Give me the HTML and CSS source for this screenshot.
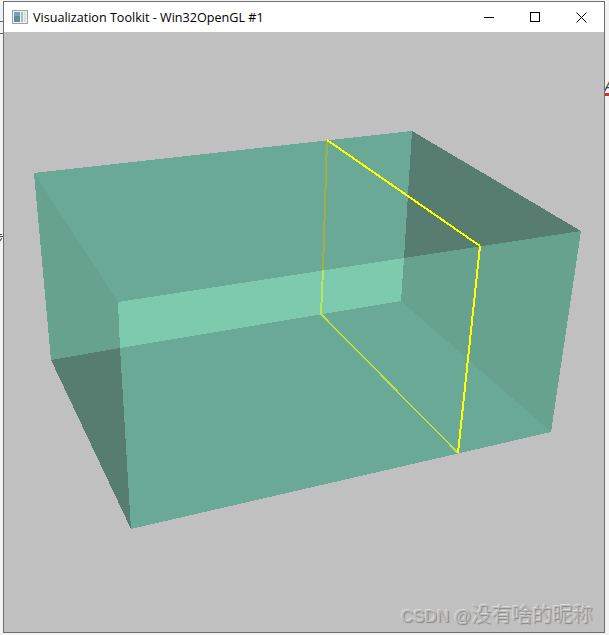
FILE: index.html
```html
<!DOCTYPE html>
<html lang="en">
<head>
<meta charset="utf-8">
<title>Visualization Toolkit - Win32OpenGL #1</title>
<link rel="stylesheet" href="styles.css">
</head>
<body>
<div class="desktop">
  <i class="bg-line bg-line-a"></i>
  <i class="bg-line bg-line-b"></i>
  <span class="bg-glyph bg-glyph-left">步</span>
  <span class="bg-glyph bg-glyph-right">A</span>
  <i class="bg-red"></i>
  <section class="window">
    <header class="titlebar">
      <svg class="app-icon" width="16" height="14" viewBox="0 0 16 14" aria-hidden="true">
        <rect x="0.5" y="0.5" width="15" height="13" fill="#eef2f4" stroke="#9aa3aa"/>
        <rect x="2" y="2" width="6" height="10" fill="#5f8f90"/>
        <rect x="2" y="2" width="6" height="4" fill="#7d9db8"/>
        <rect x="9" y="2" width="2" height="10" fill="#9fc4b4"/>
        <rect x="12" y="2" width="2" height="10" fill="#d5dfe4"/>
      </svg>
      <span class="title">Visualization Toolkit - Win32OpenGL #1</span>
      <div class="controls">
        <span class="ctl">
          <svg width="10" height="10" viewBox="0 0 10 10" aria-hidden="true"><path d="M0 5.5H10" stroke="#000" fill="none"/></svg>
        </span>
        <span class="ctl">
          <svg width="10" height="10" viewBox="0 0 10 10" aria-hidden="true"><rect x="0.5" y="0.5" width="9" height="9" stroke="#000" fill="none"/></svg>
        </span>
        <span class="ctl">
          <svg width="11" height="11" viewBox="0 0 11 11" aria-hidden="true"><path d="M0.5 0.5L10.5 10.5M10.5 0.5L0.5 10.5" stroke="#000" stroke-width="1" fill="none"/></svg>
        </span>
      </div>
    </header>
    <div class="viewport">
      <svg class="scene" width="600" height="600" viewBox="4 32 600 600" shape-rendering="crispEdges" aria-hidden="true">
        <polygon class="f-top" points="34,173 412,131 404,258 118,302"/>
        <polygon class="f-dark" points="412,131 581,231 404,258"/>
        <polygon class="f-side" points="404,258 581,231 551,432 401,301"/>
        <polygon class="f-band" points="118,302 404,258 401,301 120,348"/>
        <polygon class="f-side" points="34,173 118,302 120,348 51,360"/>
        <polygon class="f-dark" points="51,360 120,348 131,529"/>
        <polygon class="f-top" points="120,348 401,301 551,432 131,529"/>
        <line class="l-dim" x1="327" y1="140" x2="323" y2="270"/>
        <line class="l-mid" x1="323" y1="270" x2="321" y2="314"/>
        <line class="l-mid2" x1="321" y1="314" x2="458" y2="453"/>
        <line class="l-on" x1="327" y1="140" x2="480" y2="246"/>
        <line class="l-on" x1="480" y1="246" x2="458" y2="453"/>
      </svg>
      <span class="watermark">CSDN @<span class="watermark-cjk">没有啥的昵称</span></span>
    </div>
  </section>
</div>
</body>
</html>
```

FILE: styles.css
```css
* { box-sizing: border-box; }
html, body { margin: 0; padding: 0; }
body { width: 609px; height: 635px; overflow: hidden; background: #f3f3f3; }

.desktop {
  position: relative;
  width: 609px;
  height: 635px;
  padding: 1px 4px 0 3px;
}

.bg-line { position: absolute; left: 0; width: 3px; height: 1px; background: #5b6470; }
.bg-line-a { top: 21px; }
.bg-line-b { top: 33px; }
.bg-red { position: absolute; left: 605px; top: 93px; width: 4px; height: 3px; background: #c8322e; }
.bg-glyph {
  position: absolute;
  font-family: "Liberation Sans", "Noto Sans CJK SC", sans-serif;
  color: #444;
  line-height: 1;
}
.bg-glyph-left { left: -9px; top: 232px; width: 12px; height: 14px; overflow: hidden; font-size: 13px; }
.bg-glyph-right { left: 604px; top: 79px; width: 5px; overflow: hidden; font-size: 16px; font-style: italic; }

.window {
  position: relative;
  width: 602px;
  height: 632px;
  border: 1px solid #6f6f6f;
  background: #c0c0c0;
  display: flex;
  flex-direction: column;
}

.titlebar {
  flex: none;
  height: 30px;
  background: #fff;
  display: flex;
  align-items: center;
  padding-left: 8px;
}

.app-icon { flex: none; margin-right: 5px; }
.title {
  font-family: "Open Sans", "Noto Sans", sans-serif;
  font-size: 12.6px;
  color: #000;
  white-space: nowrap;
}

.controls { margin-left: auto; display: flex; height: 100%; }
.ctl { width: 46px; display: flex; align-items: center; justify-content: center; }

.viewport { position: relative; flex: none; width: 600px; height: 600px; background: #c0c0c0; }
.scene { display: block; }

.f-top { fill: #6aa995; }
.f-side { fill: #67a28e; }
.f-dark { fill: #577d70; }
.f-band { fill: #7dcaaf; }

.l-on, .l-dim, .l-mid, .l-mid2 { fill: none; stroke-width: 2; shape-rendering: crispEdges; }
.l-on { stroke: #ffff00; }
.l-dim { stroke: #9fae45; }
.l-mid { stroke: #bce65c; }
.l-mid2 { stroke: #b7e04e; stroke-width: 1.6; }

.watermark {
  position: absolute;
  left: 397px;
  top: 570px;
  font-family: "Liberation Sans", sans-serif;
  font-size: 17px;
  line-height: 22px;
  white-space: nowrap;
  color: #bababa;
  text-shadow: 1px 1px 1px #828282, -1px -1px 0 #dcdcdc;
}
.watermark-cjk {
  font-family: "Noto Sans CJK SC", sans-serif;
  font-size: 20.3px;
  font-weight: 300;
}
```
